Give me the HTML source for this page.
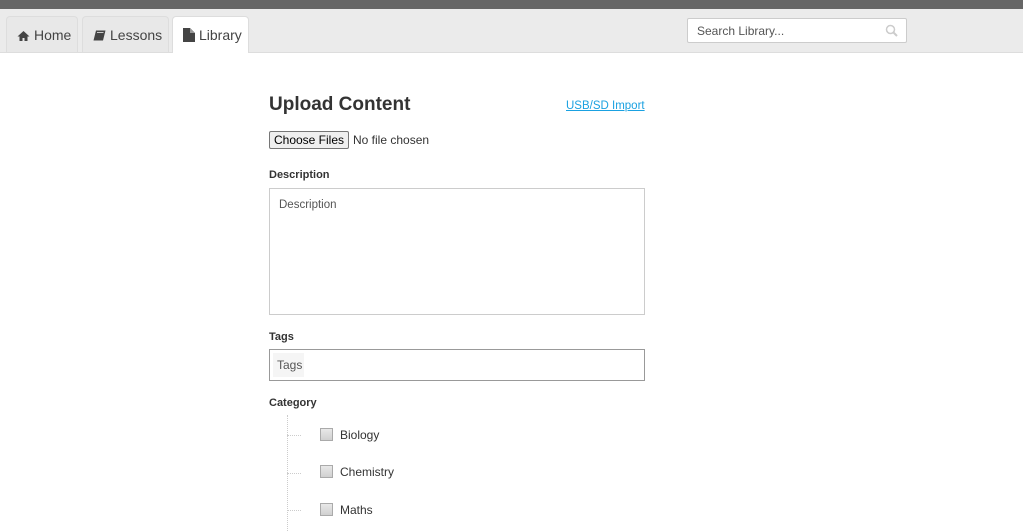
<!DOCTYPE html>
<html><head><style>
body{margin:0;width:1023px;height:531px;overflow:hidden;background:#fff;font-family:"Liberation Sans",sans-serif;color:#333}
.top{height:9px;background:#666}
.nav{height:43px;background:#ebebeb;border-bottom:1px solid #ddd;position:relative}
.tab{position:absolute;top:7px;height:36px;border:1px solid #ddd;border-bottom:none;border-radius:4px 4px 0 0;background:#e8e8e8;font-size:14px;color:#444;line-height:36px;box-sizing:border-box;padding-left:10px}
.tab.active{background:#fff;height:37px}
.tab svg{vertical-align:-2px;margin-right:4px}
.search{position:absolute;left:687px;top:9px;width:220px;height:25px;border:1px solid #ccc;border-radius:2px;background:#fff;box-sizing:border-box;font-size:12px;color:#555;line-height:24px;padding-left:9px}
h1{position:absolute;top:94px;left:269px;margin:0;font-size:19px;font-weight:bold;color:#333}
a{position:absolute;left:566px;top:100px;font-size:11.5px;color:#1aa1e1}
.btn{position:absolute;left:269px;top:131px;width:80px;height:18px;border:1px solid #767676;border-radius:2px;background:#efefef;font-size:12px;line-height:16px;text-align:center;box-sizing:border-box;color:#000}
.nf{position:absolute;left:353px;top:133px;font-size:12px;color:#333}
.lbl{position:absolute;left:269px;font-size:11px;font-weight:bold;color:#333}
.ta{position:absolute;left:269px;top:188px;width:376px;height:127px;border:1px solid #ccc;box-sizing:border-box;font-size:11.5px;color:#555;padding:10px 9px}
.tags{position:absolute;left:269px;top:349px;width:376px;height:32px;border:1px solid #999;box-sizing:border-box}
.tags span{position:absolute;left:3px;top:3px;width:31px;height:24px;background:#f5f5f5;font-size:12px;color:#555;line-height:24px;padding-left:4px;box-sizing:border-box}
.vl{position:absolute;left:287px;top:415px;height:116px;border-left:1px dotted #ccc}
.hl{position:absolute;left:287px;width:14px;border-top:1px dotted #ccc}
.cb{position:absolute;left:320px;width:13px;height:13px;border:1px solid #aaa;background:linear-gradient(#e8e8e8,#d0d0d0);box-sizing:border-box}
.ct{position:absolute;left:340px;font-size:12px;color:#333}
</style></head><body>
<div class="top"></div>
<div class="nav">
<div class="tab" style="left:6px;width:72px"><svg width="13" height="12" viewBox="0 0 13 12"><path d="M6.5 1L0.5 6.5h2V11h3V8h2v3h3V6.5h2z" fill="#444"/></svg>Home</div>
<div class="tab" style="left:82px;width:87px"><svg width="13" height="12" viewBox="0 0 13 12"><path d="M3 0.5h9.5L10 10.5H0.5z" fill="#444"/><path d="M4 2.5h6.5" stroke="#ccc"/></svg>Lessons</div>
<div class="tab active" style="left:172px;width:77px"><svg width="12" height="14" viewBox="0 0 12 14"><path d="M0 0h7l5 5v9H0z" fill="#444"/><path d="M7 0v5h5" fill="#999"/></svg>Library</div>
<div class="search">Search Library...<svg style="position:absolute;right:8px;top:5px" width="13" height="13" viewBox="0 0 13 13"><circle cx="5.5" cy="5.5" r="4" fill="none" stroke="#ccc" stroke-width="1.5"/><path d="M8.5 8.5l3.5 3.5" stroke="#ccc" stroke-width="2"/></svg></div>
</div>
<h1>Upload Content</h1>
<a href="#">USB/SD Import</a>
<div class="btn">Choose Files</div>
<div class="nf">No file chosen</div>
<div class="lbl" style="top:169px">Description</div>
<div class="ta">Description</div>
<div class="lbl" style="top:331px">Tags</div>
<div class="tags"><span>Tags</span></div>
<div class="lbl" style="top:397px">Category</div>
<div class="vl"></div>
<div class="hl" style="top:435px"></div><div class="cb" style="top:428px"></div><div class="ct" style="top:428px">Biology</div>
<div class="hl" style="top:473px"></div><div class="cb" style="top:465px"></div><div class="ct" style="top:465px">Chemistry</div>
<div class="hl" style="top:510px"></div><div class="cb" style="top:503px"></div><div class="ct" style="top:503px">Maths</div>
</body></html>
